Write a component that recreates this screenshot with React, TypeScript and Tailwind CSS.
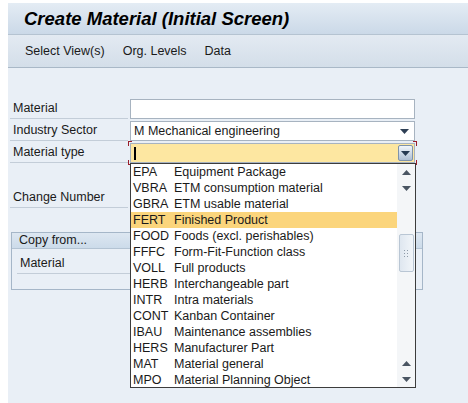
import { useState } from 'react';

const tipos = [
  { cod: 'EPA', desc: 'Equipment Package' },
  { cod: 'VBRA', desc: 'ETM consumption material' },
  { cod: 'GBRA', desc: 'ETM usable material' },
  { cod: 'FERT', desc: 'Finished Product' },
  { cod: 'FOOD', desc: 'Foods (excl. perishables)' },
  { cod: 'FFFC', desc: 'Form-Fit-Function class' },
  { cod: 'VOLL', desc: 'Full products' },
  { cod: 'HERB', desc: 'Interchangeable part' },
  { cod: 'INTR', desc: 'Intra materials' },
  { cod: 'CONT', desc: 'Kanban Container' },
  { cod: 'IBAU', desc: 'Maintenance assemblies' },
  { cod: 'HERS', desc: 'Manufacturer Part' },
  { cod: 'MAT', desc: 'Material general' },
  { cod: 'MPO', desc: 'Material Planning Object' },
];

const fonte = { fontFamily: '"Liberation Sans", Arial, sans-serif' };

function Seta({ cima = false, cor = '#4a5562' }: { cima?: boolean; cor?: string }) {
  return (
    <svg width="9" height="5" viewBox="0 0 9 5">
      <path d={cima ? 'M0 5 L4.5 0 L9 5 Z' : 'M0 0 L9 0 L4.5 5 Z'} fill={cor} />
    </svg>
  );
}

function Rotulo({ texto }: { texto: string }) {
  return (
    <div className="w-[118px] h-[20px] flex items-center pl-[3px] border-b border-[#c3cdd8] shrink-0">
      {texto}
    </div>
  );
}

export default function App() {
  const [selecionado] = useState('FERT');

  return (
    <div className="w-[468px] h-[403px] bg-white pl-2 pt-[3px] flex flex-col text-[12.5px] text-[#1a1a1a] overflow-hidden" style={fonte}>
      {/* barra de título */}
      <div className="h-[32px] shrink-0 flex items-center pl-4 bg-gradient-to-b from-[#e4ecf4] to-[#cbd9e8] border-b border-[#b5c3d1]">
        <span className="text-[18.5px] font-bold italic text-black">Create Material (Initial Screen)</span>
      </div>

      {/* barra de ferramentas */}
      <div className="h-[33px] shrink-0 flex items-center gap-[18px] pl-[17px] bg-gradient-to-b from-[#e3eaf2] to-[#d3dee9] border-b border-[#a9b8c7]">
        <span>Select View(s)</span>
        <span>Org. Levels</span>
        <span>Data</span>
      </div>

      {/* área de trabalho */}
      <div className="relative flex-1 bg-[#e9eff6] pt-[31px] pl-[2px]">
        <div className="flex flex-col gap-[2px]">
          <div className="flex items-end gap-[2px]">
            <Rotulo texto="Material" />
            <div className="w-[285px] h-[20px] bg-white border border-[#a7b3c0]" />
          </div>
          <div className="flex items-end gap-[2px]">
            <Rotulo texto="Industry Sector" />
            <div className="w-[285px] h-[20px] bg-white border border-[#a7b3c0] flex items-center justify-between pl-[3px] pr-[5px]">
              <span>M Mechanical engineering</span>
              <Seta cor="#2e3f55" />
            </div>
          </div>
          <div className="flex items-end gap-[2px]">
            <Rotulo texto="Material type" />
            <div className="relative w-[285px] h-[20px] bg-[#fde7a1] border border-[#a7b3c0] flex items-center justify-between pl-[3px] pr-[1px]">
              <span className="w-[2px] h-[13px] bg-black" />
              <div className="w-[15px] h-[16px] flex items-center justify-center bg-gradient-to-b from-[#f1f6fb] to-[#aebfd3] border border-[#7e93ab] rounded-[2px]">
                <Seta cor="#263a52" />
              </div>
              {/* cantos de foco */}
              <span className="absolute -left-[3px] -top-[3px] w-[4px] h-[5px] border-l border-t border-[#9a1f2c]" />
              <span className="absolute -right-[3px] -top-[3px] w-[4px] h-[5px] border-r border-t border-[#9a1f2c]" />
              <span className="absolute -left-[3px] -bottom-[3px] w-[4px] h-[5px] border-l border-b border-[#9a1f2c]" />
              <span className="absolute -right-[3px] -bottom-[3px] w-[4px] h-[5px] border-r border-b border-[#9a1f2c]" />
            </div>
          </div>
          <div className="flex items-end gap-[2px] mt-[23px]">
            <Rotulo texto="Change Number" />
          </div>
        </div>

        {/* grupo Copy from */}
        <div className="mt-[24px] ml-[1px] w-[412px] h-[58px] border border-[#a5b6c8] bg-[#e9eff6]">
          <div className="h-[16px] flex items-center pl-[7px] bg-gradient-to-b from-[#dde7f1] to-[#ccdbea] border-b border-[#b3c3d3]">
            Copy from...
          </div>
          <div className="flex pl-[5px] pt-[5px]">
            <Rotulo texto="Material" />
          </div>
        </div>

        {/* lista de valores possíveis */}
        <div className="absolute left-[122px] top-[95px] w-[286px] h-[225px] bg-white border border-[#3c3c3c] flex">
          <div className="flex-1 flex flex-col">
            {tipos.map((t) => (
              <div
                key={t.cod}
                className={`h-[16px] flex items-center pl-[2px] ${t.cod === selecionado ? 'bg-[#fbd57c]' : ''}`}
              >
                <span className="w-[41px] shrink-0">{t.cod}</span>
                <span>{t.desc}</span>
              </div>
            ))}
          </div>
          <div className="w-[18px] bg-[#f4f6f8] flex flex-col items-center">
            <div className="h-[16px] flex items-center"><Seta cima /></div>
            <div className="h-[16px] flex items-center"><Seta /></div>
            <div className="mt-[38px] w-[15px] h-[38px] bg-gradient-to-r from-[#dfe7f0] to-[#f1f5f9] border border-[#b9c6d4] rounded-[2px] flex items-center justify-center">
              <div className="grid grid-cols-2 gap-[2px]">
                <span className="w-[1px] h-[1px] bg-[#8d9aa8]" />
                <span className="w-[1px] h-[1px] bg-[#8d9aa8]" />
                <span className="w-[1px] h-[1px] bg-[#8d9aa8]" />
                <span className="w-[1px] h-[1px] bg-[#8d9aa8]" />
                <span className="w-[1px] h-[1px] bg-[#8d9aa8]" />
                <span className="w-[1px] h-[1px] bg-[#8d9aa8]" />
              </div>
            </div>
            <div className="flex-1" />
            <div className="h-[16px] flex items-center"><Seta cima /></div>
            <div className="h-[16px] flex items-center"><Seta /></div>
          </div>
        </div>
      </div>
    </div>
  );
}
